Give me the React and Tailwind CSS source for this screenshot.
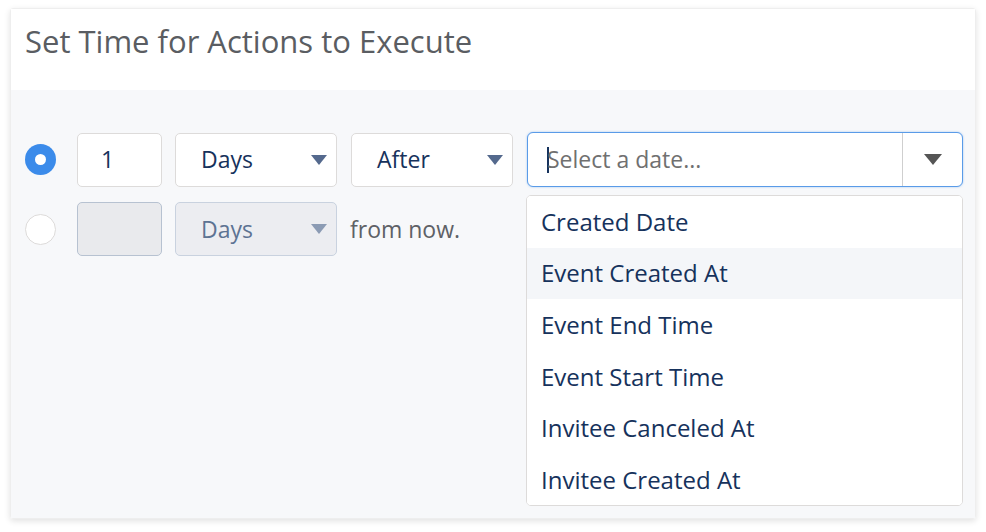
import React from "react";

const font = { fontFamily: '"Open Sans", "Liberation Sans", sans-serif' };

function Caret({ className }) {
  return (
    <svg width="16" height="10" viewBox="0 0 16 10" className={className}>
      <path d="M0 0 H16 L8 10 Z" fill="currentColor" />
    </svg>
  );
}

function Radio({ checked }) {
  return checked ? (
    <div className="w-[31px] h-[31px] rounded-full bg-[#3b8bea] flex items-center justify-center shrink-0">
      <div className="w-[11px] h-[11px] rounded-full bg-white" />
    </div>
  ) : (
    <div className="w-[31px] h-[31px] rounded-full bg-white border border-[#dddbda] shrink-0" />
  );
}

function Select({ label, disabled }) {
  return (
    <div
      className={
        "w-[162px] h-[54px] rounded-[5px] border flex items-center justify-between pl-[25px] pr-[9px] shrink-0 " +
        (disabled
          ? "bg-[#ecedf1] border-[#c9d2df] text-[#5d7393]"
          : "bg-white border-[#dddbda] text-[#16325c]")
      }
    >
      <span className="text-[23px]">{label}</span>
      <Caret className={disabled ? "text-[#8b9bb4]" : "text-[#54698d]"} />
    </div>
  );
}

export default function App() {
  const items = [
    "Created Date",
    "Event Created At",
    "Event End Time",
    "Event Start Time",
    "Invitee Canceled At",
    "Invitee Created At",
  ];
  return (
    <div className="w-[986px] h-[532px] bg-white pt-[8px] pl-[10px]" style={font}>
      <div className="w-[966px] h-[511px] rounded-[3px] shadow-[0_2px_6px_rgba(0,0,0,0.12)] border border-[#eeeeee] flex flex-col overflow-visible relative">
        <div className="h-[81px] bg-white px-[14px] pt-[12px]">
          <h1 className="text-[31px] text-[#5a5d62] leading-[40px]">
            Set Time for Actions to Execute
          </h1>
        </div>
        <div className="flex-1 bg-[#f7f8fa] pt-[42px] pl-[14px] flex flex-col gap-[15px]">
          <div className="flex items-center">
            <Radio checked />
            <div className="ml-[21px] w-[85px] h-[54px] rounded-[5px] border border-[#dddbda] bg-white flex items-center pl-[23px] text-[23px] text-[#16325c] shrink-0">
              1
            </div>
            <div className="ml-[13px]">
              <Select label="Days" />
            </div>
            <div className="ml-[14px]">
              <Select label="After" />
            </div>
            <div className="ml-[14px] w-[436px] h-[55px] rounded-[6px] border border-[#5a9be8] bg-white flex items-stretch shadow-[0_0_2px_rgba(59,139,234,0.5)] shrink-0">
              <div className="flex-1 flex items-center pl-[19px]">
                <span className="w-[2px] h-[26px] bg-[#16325c] -mr-[2px]" />
                <span className="text-[23px] text-[#707070]">Select a date...</span>
              </div>
              <div className="w-[60px] border-l border-[#cfcfcf] flex items-center justify-center">
                <svg width="18" height="11" viewBox="0 0 18 11">
                  <path d="M0 0 H18 L9 11 Z" fill="#555555" />
                </svg>
              </div>
            </div>
          </div>
          <div className="flex items-center">
            <Radio />
            <div className="ml-[21px] w-[85px] h-[54px] rounded-[5px] border border-[#b7c2d1] bg-[#e9eaed] shrink-0" />
            <div className="ml-[13px]">
              <Select label="Days" disabled />
            </div>
            <span className="ml-[13px] text-[23px] text-[#5e6166]">from now.</span>
          </div>
        </div>
        <div className="absolute left-[515px] top-[186px] w-[437px] h-[311px] bg-white border border-[#dddbda] rounded-[5px] flex flex-col overflow-hidden">
          {items.map((t, i) => (
            <div
              key={t}
              className={
                "h-[51.6px] shrink-0 flex items-center pl-[14px] text-[24px] text-[#16325c] " +
                (i === 1 ? "bg-[#f4f6f9]" : "bg-white")
              }
            >
              {t}
            </div>
          ))}
        </div>
      </div>
    </div>
  );
}
